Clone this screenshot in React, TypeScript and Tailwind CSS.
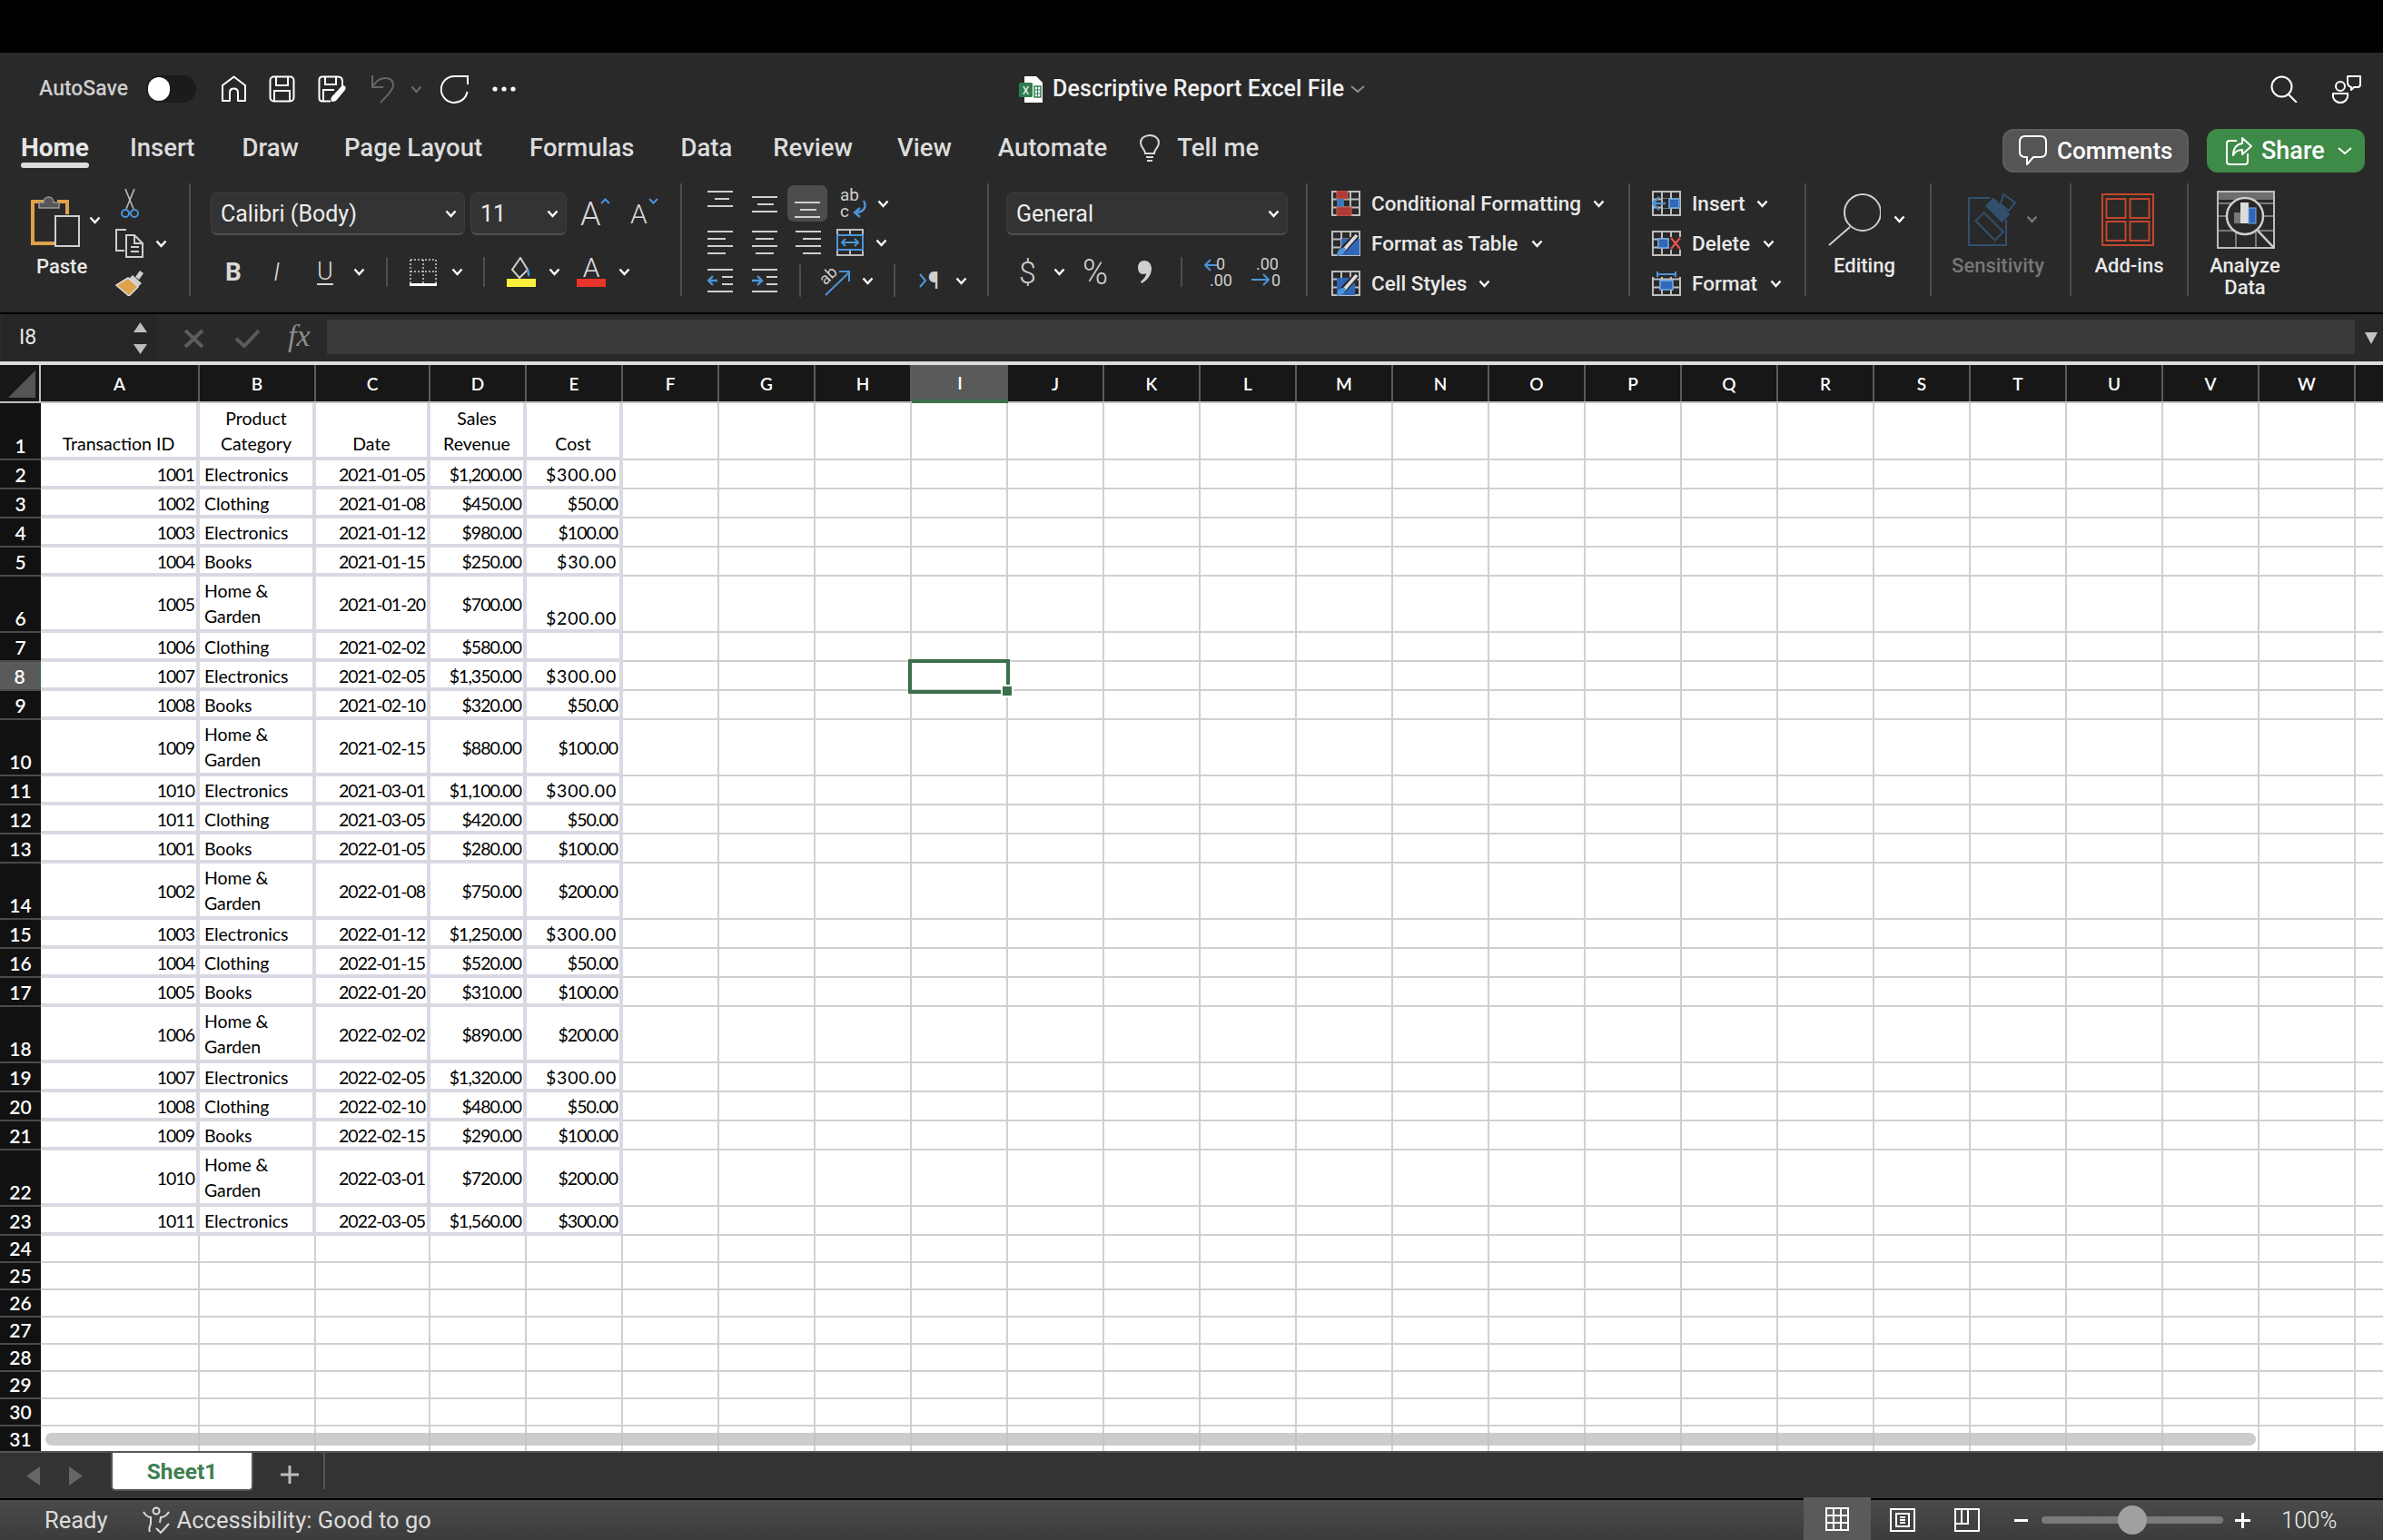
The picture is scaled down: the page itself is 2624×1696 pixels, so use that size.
import type { ReactNode } from 'react'

// ---------- sheet data ----------

type Row = {
  id: string
  cat: string
  date: string
  rev: string
  cost: string
  wideCost?: boolean
}

const DATA: Row[] = [
  { id: '1001', cat: 'Electronics', date: '2021-01-05', rev: '$1,200.00', cost: '$300.00', wideCost: true },
  { id: '1002', cat: 'Clothing', date: '2021-01-08', rev: '$450.00', cost: '$50.00' },
  { id: '1003', cat: 'Electronics', date: '2021-01-12', rev: '$980.00', cost: '$100.00' },
  { id: '1004', cat: 'Books', date: '2021-01-15', rev: '$250.00', cost: '$30.00', wideCost: true },
  { id: '1005', cat: 'Home &|Garden', date: '2021-01-20', rev: '$700.00', cost: '$200.00', wideCost: true },
  { id: '1006', cat: 'Clothing', date: '2021-02-02', rev: '$580.00', cost: '' },
  { id: '1007', cat: 'Electronics', date: '2021-02-05', rev: '$1,350.00', cost: '$300.00', wideCost: true },
  { id: '1008', cat: 'Books', date: '2021-02-10', rev: '$320.00', cost: '$50.00' },
  { id: '1009', cat: 'Home &|Garden', date: '2021-02-15', rev: '$880.00', cost: '$100.00' },
  { id: '1010', cat: 'Electronics', date: '2021-03-01', rev: '$1,100.00', cost: '$300.00', wideCost: true },
  { id: '1011', cat: 'Clothing', date: '2021-03-05', rev: '$420.00', cost: '$50.00' },
  { id: '1001', cat: 'Books', date: '2022-01-05', rev: '$280.00', cost: '$100.00' },
  { id: '1002', cat: 'Home &|Garden', date: '2022-01-08', rev: '$750.00', cost: '$200.00' },
  { id: '1003', cat: 'Electronics', date: '2022-01-12', rev: '$1,250.00', cost: '$300.00', wideCost: true },
  { id: '1004', cat: 'Clothing', date: '2022-01-15', rev: '$520.00', cost: '$50.00' },
  { id: '1005', cat: 'Books', date: '2022-01-20', rev: '$310.00', cost: '$100.00' },
  { id: '1006', cat: 'Home &|Garden', date: '2022-02-02', rev: '$890.00', cost: '$200.00' },
  { id: '1007', cat: 'Electronics', date: '2022-02-05', rev: '$1,320.00', cost: '$300.00', wideCost: true },
  { id: '1008', cat: 'Clothing', date: '2022-02-10', rev: '$480.00', cost: '$50.00' },
  { id: '1009', cat: 'Books', date: '2022-02-15', rev: '$290.00', cost: '$100.00' },
  { id: '1010', cat: 'Home &|Garden', date: '2022-03-01', rev: '$720.00', cost: '$200.00' },
  { id: '1011', cat: 'Electronics', date: '2022-03-05', rev: '$1,560.00', cost: '$300.00' },
]

const EMPTY_COLS = ['F', 'G', 'H', 'I', 'J', 'K', 'L', 'M', 'N', 'O', 'P', 'Q', 'R', 'S', 'T', 'U', 'V', 'W', '']

// ---------- small icon helpers ----------

function Chev({ className = '', color = '#fff' }: { className?: string; color?: string }) {
  return (
    <svg width="13" height="9" viewBox="0 0 13 9" className={`shrink-0 ${className}`}>
      <path d="M1.5 1.5 6.5 7l5-5.5" fill="none" stroke={color} strokeWidth="2.4" />
    </svg>
  )
}

function Sep({ className = '' }: { className?: string }) {
  return <div className={`w-[2px] bg-[#4d4d4d] shrink-0 ${className}`} />
}

function Lines({ kind, className = '' }: { kind: string; className?: string }) {
  const c = '#cfcfcf'
  const sets: Record<string, [number, number, number][]> = {
    top: [[0, 1, 28], [8, 9, 24], [0, 17, 28]],
    mid: [[0, 1, 28], [6, 9, 24], [0, 17, 28]],
    left: [[0, 1, 28], [0, 9, 20], [0, 17, 28], [0, 25, 20]],
    center: [[0, 1, 28], [4, 9, 24], [0, 17, 28], [4, 25, 24]],
    right: [[0, 1, 28], [8, 9, 28], [0, 17, 28], [8, 25, 28]],
  }
  const set = sets[kind]
  return (
    <svg width="28" height={set.length === 4 ? 26 : 18} className={`shrink-0 ${className}`}>
      {set.map(([a, y, b], i) => (
        <rect key={i} x={a} y={y - 1} width={b - a} height="2" fill={c} />
      ))}
    </svg>
  )
}

function Indent({ dir, className = '' }: { dir: 'in' | 'out'; className?: string }) {
  return (
    <svg width="28" height="26" className={`shrink-0 ${className}`}>
      <path d="M0 1h28M16 9h12M16 17h12M0 25h28" stroke="#cfcfcf" strokeWidth="2" />
      {dir === 'out' ? (
        <path d="M11 13H1M6 8l-5 5 5 5" fill="none" stroke="#4c94d8" strokeWidth="2.4" />
      ) : (
        <path d="M0 13h10M6 8l5 5-5 5" fill="none" stroke="#4c94d8" strokeWidth="2.4" />
      )}
    </svg>
  )
}

function GridIcon({ children, className = '' }: { children?: ReactNode; className?: string }) {
  return (
    <svg width="32" height="28" className={`shrink-0 ${className}`}>
      <path d="M1 1h30v26H1zM11 1v26M21 1v26M1 9.500h30M1 18.500h30" fill="none" stroke="#bdbdbd" strokeWidth="2" />
      {children}
    </svg>
  )
}

function Brush() {
  return (
    <>
      <path d="M12 22 28 5" stroke="#292929" strokeWidth="7" />
      <path d="M13 22 28 5" stroke="#dedede" strokeWidth="3.500" />
      <path d="M6 28c0-6 4-10 9-9 2 4-3 9-9 9Z" fill="#4c94d8" />
    </>
  )
}

function Home() {
  return (
    <svg width="29" height="30" fill="none" stroke="#fff" strokeWidth="2" className="ml-[27px] shrink-0">
      <path d="M2 28V11L14.500 1.500 27 11v17h-8V19c0-3-2-4.500-4.500-4.500S10 16 10 19v9Z" strokeLinejoin="round" />
    </svg>
  )
}

function Save({ className = '' }: { className?: string }) {
  return (
    <svg width="29" height="30" fill="none" stroke="#fff" strokeWidth="2" className={`shrink-0 ${className}`}>
      <rect x="1.500" y="1.500" width="26" height="27" rx="4" />
      <path d="M8 2v9h13V2M6 28V17h17v11" />
    </svg>
  )
}

function SaveAs({ className = '' }: { className?: string }) {
  return (
    <svg width="32" height="30" fill="none" stroke="#fff" strokeWidth="2" className={`shrink-0 ${className}`}>
      <path d="M14 28.500H5c-2 0-3.500-1.500-3.500-3.500V5c0-2 1.500-3.500 3.500-3.500h17c3 0 5 2 5 5v6" />
      <path d="M8 2v8h12V2M6 28V16h12" />
      <path d="M17 29c-3 0-3-2-2-5l11-12c3-2 6 1 4 4L20 28Z" fill="#fff" stroke="none" />
    </svg>
  )
}

function Undo({ className = '' }: { className?: string }) {
  return (
    <svg width="26" height="32" fill="none" stroke="#666" strokeWidth="2" className={`shrink-0 ${className}`}>
      <path d="M2 1v13h12M2 14C9 1 25 1 25 12c0 6-9 13-14 19" />
    </svg>
  )
}

function Redo({ className = '' }: { className?: string }) {
  return (
    <svg width="32" height="32" fill="none" stroke="#fff" strokeWidth="2" className={`shrink-0 ${className}`}>
      <path d="M15 2H30V11M29.500 19A14.500 14.500 0 1 1 15 2" />
    </svg>
  )
}

// ---------- title bar ----------

function TitleRow() {
  return (
    <div className="flex items-center h-[80px]">
      <span className="ml-[43px] text-[23px] font-medium text-[#cdcdcd]">AutoSave</span>
      <div className="ml-[20px] w-[55px] h-[30px] rounded-full bg-[#1b1b1b] flex items-center pl-[2px]">
        <div className="w-[24px] h-[26px] rounded-full bg-white" />
      </div>
      <Home />
      <Save className="ml-[24px]" />
      <SaveAs className="ml-[25px]" />
      <Undo className="ml-[26px]" />
      <Chev className="ml-[18px]" color="#666" />
      <Redo className="ml-[20px]" />
      <svg width="26" height="6" className="ml-[25px] shrink-0" fill="#fff">
        <circle cx="3" cy="3" r="2.600" />
        <circle cx="13" cy="3" r="2.600" />
        <circle cx="23" cy="3" r="2.600" />
      </svg>
      <svg width="26" height="29" className="ml-[554px] shrink-0">
        <path d="M6 0h13l7 7v22H6Z" fill="#fff" />
        <path d="M17 11h7v12h-7z" fill="none" stroke="#2f7d4f" strokeWidth="1.500" />
        <path d="M20.500 11v12M17 15h7M17 19h7" stroke="#2f7d4f" strokeWidth="1" />
        <rect x="0" y="7" width="15" height="16" rx="1.500" fill="#2f7d4f" />
        <text x="7.500" y="19.500" textAnchor="middle" fontSize="12" fill="#fff" fontFamily="Roboto, sans-serif">X</text>
      </svg>
      <span className="ml-[11px] text-[25px] font-medium text-[#f0f0f0] whitespace-nowrap tracking-[0.1px]">Descriptive Report Excel File</span>
      <svg width="16" height="9" className="ml-[7px] shrink-0">
        <path d="M1 1l7 6 7-6" fill="none" stroke="#8e8e8e" strokeWidth="2" />
      </svg>
      <svg width="30" height="30" fill="none" stroke="#fff" strokeWidth="2" className="ml-auto shrink-0">
        <circle cx="12.500" cy="12.500" r="11" />
        <path d="M20 21l9 9" />
      </svg>
      <svg width="34" height="32" fill="none" stroke="#fff" strokeWidth="2" className="ml-[37px] mr-[23px] shrink-0">
        <circle cx="10" cy="13" r="5" />
        <path d="M2 21h16c1 6-3 10-8 10s-9-4-8-10Z" />
        <path d="M18 2h14v9c0 2-1 3-3 3h-4l-3 3v-3c-3-1-4-3-4-5Z" strokeLinejoin="round" />
      </svg>
    </div>
  )
}

const TABS: [string, string][] = [
  ['Insert', 'ml-[45px]'],
  ['Draw', 'ml-[52px]'],
  ['Page Layout', 'ml-[50px]'],
  ['Formulas', 'ml-[52px]'],
  ['Data', 'ml-[51px]'],
  ['Review', 'ml-[45px]'],
  ['View', 'ml-[49px]'],
  ['Automate', 'ml-[51px]'],
]

function TabRow() {
  return (
    <div className="flex h-[64px] pl-[23px] items-start">
      <div className="flex items-center h-[50px] text-[27.5px] text-[#dcdcdc] font-medium">
        <span className="relative text-[28px] font-bold text-[#e6e6e6]">
          Home
          <span className="absolute left-0 right-0 top-[37px] h-[6px] rounded-full bg-[#dcdcdc]" />
        </span>
        {TABS.map(([t, ml]) => (
          <span key={t} className={ml}>{t}</span>
        ))}
        <svg width="24" height="30" fill="none" stroke="#d8d8d8" strokeWidth="2" className="ml-[35px] shrink-0">
          <path d="M7 21c0-5-5-6-5-12a10 8 0 0 1 20 0c0 6-5 7-5 12Z" />
          <path d="M8 25h8M9 29h6" />
        </svg>
        <span className="ml-[18px]">Tell me</span>
      </div>
      <button className="ml-auto mt-[4px] w-[205px] h-[48px] rounded-[12px] bg-[#555] border-2 border-[#5e5e5e] flex items-center pl-[15px] text-[26px] font-medium text-white">
        <svg width="33" height="36" fill="none" stroke="#fff" strokeWidth="2" className="shrink-0">
          <path d="M8 2h17c4 0 6 2 6 6v11c0 4-2 6-6 6H17l-7 8v-8H8c-4 0-6-2-6-6V8c0-4 2-6 6-6Z" strokeLinejoin="round" />
        </svg>
        <span className="ml-[10px]">Comments</span>
      </button>
      <button className="ml-[20px] mr-[20px] mt-[4px] w-[174px] h-[48px] rounded-[12px] bg-[#3e8a47] flex items-center pl-[20px] text-[27px] font-medium text-white">
        <svg width="30" height="32" fill="none" stroke="#fff" strokeWidth="2" className="shrink-0">
          <path d="M13 5H5C3 5 2 6 2 8v20c0 2 1 3 3 3h17c2 0 3-1 3-3v-9" />
          <path d="M19 2l10 9-10 9v-5c-5 0-8 2-10 6 0-8 4-12 10-13Z" strokeLinejoin="round" />
        </svg>
        <span className="ml-[10px]">Share</span>
        <svg width="16" height="9" className="ml-[14px] shrink-0">
          <path d="M1 1l7 6 7-6" fill="none" stroke="#fff" strokeWidth="2" />
        </svg>
      </button>
    </div>
  )
}

// ---------- ribbon groups ----------

function Clipboard() {
  return (
    <div className="w-[208px] shrink-0 flex">
      <div className="ml-[34px] mt-[10px] flex flex-col">
        <div className="flex items-center">
          <svg width="54" height="60" className="shrink-0">
            <path d="M29 10h11v14M27 56H2V10h12" fill="none" stroke="#dfa24b" strokeWidth="4" />
            <path d="M9 17v-6h5c0-8 11-8 11 0h6v6Z" fill="#555" stroke="#9a9a9a" strokeWidth="1.500" />
            <rect x="27" y="26" width="26" height="33" fill="#292929" stroke="#cfcfcf" strokeWidth="2" />
          </svg>
          <Chev className="ml-[10px]" />
        </div>
        <span className="mt-[5px] ml-[6px] text-[22px] font-medium text-[#e8e8e8]">Paste</span>
      </div>
      <div className="ml-[16px] flex flex-col">
        <div className="flex pl-[6px] mt-[6px] h-[36px]">
          <svg width="20" height="32" fill="none" className="shrink-0">
            <path d="M5 0l9 22M15 0 6 22" stroke="#bdbdbd" strokeWidth="1.600" />
            <circle cx="5" cy="27" r="4" stroke="#4c94d8" strokeWidth="2" />
            <circle cx="15" cy="27" r="4" stroke="#4c94d8" strokeWidth="2" />
          </svg>
        </div>
        <div className="flex items-center h-[32px] mt-[8px]">
          <svg width="32" height="32" fill="none" stroke="#cfcfcf" strokeWidth="2" className="shrink-0">
            <path d="M12 1H1v23h9M12 7h9l9 9v15H12ZM21 8v8h9" />
            <path d="M17 20h9M17 25h9" />
          </svg>
          <Chev className="ml-[12px]" />
        </div>
        <svg width="32" height="29" className="mt-[13px] shrink-0">
          <path d="M22 8l5-7 4 3-5 7Z" fill="#cfcfcf" />
          <path d="M19 6l10 9-4 4-10-9Z" fill="#cfcfcf" />
          <path d="M14 9 1 17l14 12 10-10Z" fill="#dfa24b" stroke="#dcdcdc" strokeWidth="1.500" />
        </svg>
      </div>
    </div>
  )
}

function SelectBox({ children, className = '' }: { children: ReactNode; className?: string }) {
  return (
    <div className={`h-[47px] rounded-[7px] bg-[#333] border border-[#3d3d3d] border-b-2 border-b-[#4f4f4f] flex items-center justify-between pt-[1px] pl-[10px] pr-[8px] text-[25px] text-[#ececec] ${className}`}>
      {children}
    </div>
  )
}

function FontGroup() {
  return (
    <div className="w-[539px] shrink-0 flex flex-col pl-[22px]">
      <div className="flex items-center mt-[10px]">
        <SelectBox className="w-[280px]">
          <span className="whitespace-nowrap">Calibri (Body)</span>
          <Chev />
        </SelectBox>
        <SelectBox className="w-[106px] ml-[6px]">
          <span>11</span>
          <Chev />
        </SelectBox>
        <div className="relative ml-[15px] w-[30px] text-[36px] font-light leading-none text-[#d8d8d8]">
          A
          <svg width="11" height="8" className="absolute left-[22px] top-[0px]">
            <path d="M1 6l4.500-4.500L10 6" fill="none" stroke="#4c94d8" strokeWidth="2" />
          </svg>
        </div>
        <div className="relative ml-[25px] w-[30px] text-[30px] font-light leading-none text-[#d8d8d8]">
          A
          <svg width="11" height="8" className="absolute left-[20px] top-[-4px]">
            <path d="M1 2l4.500 4.500L10 2" fill="none" stroke="#4c94d8" strokeWidth="2" />
          </svg>
        </div>
      </div>
      <div className="flex items-center mt-[24px] h-[33px]">
        <span className="ml-[16px] w-[16px] text-[28px] font-bold text-[#d8d8d8]">B</span>
        <span className="ml-[37px] w-[14px] text-[28px] italic font-light text-[#d8d8d8]">I</span>
        <span className="ml-[33px] w-[20px] text-[27px] font-light underline underline-offset-4 text-[#d8d8d8] text-center">U</span>
        <Chev className="ml-[21px]" />
        <Sep className="ml-[23px] h-[33px]" />
        <svg width="30" height="30" className="ml-[24px] shrink-0">
          <path d="M1 1h28M1 1v26M29 1v26M15 1v26M1 14h28" stroke="#cfcfcf" strokeWidth="1.500" strokeDasharray="2 2" fill="none" />
          <rect x="0" y="27" width="30" height="3" fill="#fff" />
        </svg>
        <Chev className="ml-[16px]" />
        <Sep className="ml-[22px] h-[33px]" />
        <svg width="32" height="33" className="ml-[24px] shrink-0">
          <path d="M15 1 6 14l8 9 9-9Z" fill="none" stroke="#cfcfcf" strokeWidth="2" />
          <path d="M23 12c3 4 3 8 1 10-2-3-2-6-1-10Z" fill="#4c94d8" />
          <rect x="0" y="24" width="32" height="9" fill="#fdf03c" />
        </svg>
        <Chev className="ml-[14px]" />
        <div className="ml-[18px] w-[32px] flex flex-col items-center shrink-0">
          <span className="text-[30px] font-light leading-[24px] text-[#e0e0e0]">A</span>
          <div className="w-[32px] h-[9px] bg-[#e8342a]" />
        </div>
        <Chev className="ml-[14px]" />
      </div>
    </div>
  )
}

function AlignGroup() {
  return (
    <div className="w-[336px] shrink-0 flex flex-col pl-[28px]">
      <div className="flex items-start h-[44px] mt-[2px]">
        <Lines kind="top" className="mt-[6px]" />
        <Lines kind="mid" className="mt-[12px] ml-[21px]" />
        <div className="ml-[11px] w-[44px] h-[40px] rounded-[7px] bg-[#4d4d4d] flex justify-center pt-[18px]">
          <Lines kind="mid" />
        </div>
        <svg width="32" height="42" className="ml-[14px] -mt-[1px] shrink-0">
          <text x="0" y="18" fontSize="19" fill="#cfcfcf" fontFamily="Roboto, sans-serif">ab</text>
          <text x="0" y="36" fontSize="19" fill="#cfcfcf" fontFamily="Roboto, sans-serif">c</text>
          <path d="M26 18c3 5 2 13-9 13M22 26l-6 5 6 5" fill="none" stroke="#4c94d8" strokeWidth="2.400" />
        </svg>
        <Chev className="ml-[9px] mt-[16px]" />
      </div>
      <div className="flex items-center h-[30px] mt-[4px]">
        <Lines kind="left" />
        <Lines kind="center" className="ml-[21px]" />
        <Lines kind="right" className="ml-[20px]" />
        <svg width="30" height="30" className="ml-[17px] shrink-0">
          <path d="M1 1h28v28H1zM15 1v6M15 23v6" fill="none" stroke="#bdbdbd" strokeWidth="2" />
          <rect x="1" y="7" width="28" height="16" fill="#292929" stroke="#4c94d8" strokeWidth="2" />
          <path d="M6 15h18M10 11l-4 4 4 4M20 11l4 4-4 4" fill="none" stroke="#4c94d8" strokeWidth="2" />
        </svg>
        <Chev className="ml-[13px]" />
      </div>
      <div className="flex items-center h-[36px] mt-[9px]">
        <Indent dir="out" />
        <Indent dir="in" className="ml-[21px]" />
        <Sep className="ml-[24px] h-[36px]" />
        <svg width="53" height="54" className="ml-[13px] shrink-0">
          <g transform="translate(10 10)">
            <text x="0" y="17" fontSize="18" fill="#cfcfcf" fontFamily="Roboto, sans-serif" transform="rotate(-45 9 15)">ab</text>
            <path d="M4 33 30 8M19 7h11v11" fill="none" stroke="#4c94d8" strokeWidth="2" />
          </g>
        </svg>
        <Chev className="ml-[1px]" />
        <Sep className="ml-[22px] h-[36px]" />
        <span className="ml-[26px] flex items-center shrink-0">
          <svg width="9" height="16" className="shrink-0">
            <path d="M1 1l6 7-6 7" fill="none" stroke="#4c94d8" strokeWidth="2.200" />
          </svg>
          <span className="ml-[1px] w-[16px] text-[25px] text-[#cfcfcf] leading-none">¶</span>
        </span>
        <Chev className="ml-[14px]" />
      </div>
    </div>
  )
}

function NumberGroup() {
  return (
    <div className="w-[349px] shrink-0 flex flex-col pl-[19px]">
      <SelectBox className="w-[310px] mt-[10px]">
        <span>General</span>
        <Chev />
      </SelectBox>
      <div className="flex items-center mt-[24px] h-[33px] text-[#cfcfcf]">
        <span className="ml-[14px] w-[17px] text-[34px] font-light leading-none">$</span>
        <Chev className="ml-[21px]" />
        <span className="ml-[19px] w-[31px] text-[38px] font-light leading-none">%</span>
        <svg width="15" height="25" className="ml-[30px] shrink-0" fill="#cfcfcf">
          <path d="M7 0c5 0 8 4 8 9 0 7-5 13-11 16l-1-2c3-2 6-6 6-9-1 .5-2 1-3 1-4 0-6-3-6-7.500S3 0 7 0Z" />
        </svg>
        <Sep className="ml-[32px] h-[33px]" />
        <svg width="31" height="41" className="ml-[24px] shrink-0">
          <text x="13" y="18" fontSize="18" fill="#cfcfcf" fontFamily="Roboto, sans-serif">0</text>
          <text x="6" y="36" fontSize="18" fill="#cfcfcf" fontFamily="Roboto, sans-serif">.00</text>
          <path d="M14 13H2M7 7 1 13l6 6" fill="none" stroke="#4c94d8" strokeWidth="2" />
        </svg>
        <svg width="32" height="41" className="ml-[21px] shrink-0">
          <text x="5" y="18" fontSize="18" fill="#cfcfcf" fontFamily="Roboto, sans-serif">.00</text>
          <text x="22" y="36" fontSize="18" fill="#cfcfcf" fontFamily="Roboto, sans-serif">0</text>
          <path d="M0 29h18M13 23l6 6-6 6" fill="none" stroke="#4c94d8" strokeWidth="2" />
        </svg>
      </div>
    </div>
  )
}

function MenuRow({ icon, label, className = '', gap = 'ml-[12px]' }: { icon: ReactNode; label: string; className?: string; gap?: string }) {
  return (
    <div className={`flex items-center h-[28px] ${className}`}>
      {icon}
      <span className="ml-[12px] pt-[2px] text-[22.5px] font-medium text-[#e8e8e8] whitespace-nowrap">{label}</span>
      <Chev className={gap} />
    </div>
  )
}

function StylesGroup() {
  return (
    <div className="w-[353px] shrink-0 flex flex-col pl-[26px] pt-[8px]">
      <MenuRow
        label="Conditional Formatting"
        gap="ml-[13px]"
        icon={
          <GridIcon>
            <rect x="6" y="0" width="12" height="9" fill="#b03a34" stroke="#c9605a" strokeWidth="1" />
            <rect x="6" y="9" width="8" height="9" fill="#3d79b8" />
            <rect x="6" y="18" width="16" height="10" fill="#b03a34" stroke="#c9605a" strokeWidth="1" />
          </GridIcon>
        }
      />
      <MenuRow
        label="Format as Table"
        gap="ml-[15px]"
        className="mt-[16px]"
        icon={
          <GridIcon>
            <rect x="11" y="9" width="20" height="18" fill="#2f68b8" />
            <Brush />
          </GridIcon>
        }
      />
      <MenuRow
        label="Cell Styles"
        gap="ml-[13px]"
        className="mt-[16px]"
        icon={
          <GridIcon>
            <rect x="6" y="8" width="20" height="19" fill="#2f68b8" />
            <Brush />
          </GridIcon>
        }
      />
    </div>
  )
}

function CellsGroup() {
  return (
    <div className="w-[192px] shrink-0 flex flex-col pl-[24px] pt-[8px]">
      <MenuRow
        label="Insert"
        icon={
          <GridIcon>
            <rect x="12" y="9" width="19" height="10" fill="#292929" />
            <rect x="19" y="9" width="11" height="10" fill="#2f68b8" stroke="#79aee6" strokeWidth="1.500" />
            <path d="M15 14H2M8 7 1 14l7 7" fill="none" stroke="#4c94d8" strokeWidth="2.400" />
          </GridIcon>
        }
      />
      <MenuRow
        label="Delete"
        gap="ml-[14px]"
        className="mt-[16px]"
        icon={
          <GridIcon>
            <rect x="19" y="7" width="13" height="14" fill="#292929" />
            <rect x="7" y="9" width="11" height="10" fill="#2f68b8" stroke="#79aee6" strokeWidth="1.500" />
            <path d="M21 8l10 12M31 8 21 20" stroke="#e4544d" strokeWidth="2.200" />
          </GridIcon>
        }
      />
      <MenuRow
        label="Format"
        gap="ml-[14px]"
        className="mt-[16px]"
        icon={
          <GridIcon>
            <rect x="0" y="0" width="32" height="7" fill="#292929" />
            <path d="M6 1v6M26 1v6M6 4h20" stroke="#4c94d8" strokeWidth="2" />
            <rect x="9" y="11" width="14" height="10" fill="#2f68b8" stroke="#79aee6" strokeWidth="1.500" />
          </GridIcon>
        }
      />
    </div>
  )
}

function LargeGroup({ width, icon, label, className = '', pl }: { width: string; icon: ReactNode; label: ReactNode; className?: string; pl: string }) {
  return (
    <div className={`${width} shrink-0 flex flex-col items-center ${className}`}>
      <div className={`h-[79px] flex items-center self-start ${pl}`}>{icon}</div>
      <span className="text-[22px] font-medium leading-[24px] text-center">{label}</span>
    </div>
  )
}

function Ribbon() {
  return (
    <div className="flex h-[124px] items-start">
      <Clipboard />
      <Sep className="h-[124px]" />
      <FontGroup />
      <Sep className="h-[124px]" />
      <AlignGroup />
      <Sep className="h-[124px]" />
      <NumberGroup />
      <Sep className="h-[124px]" />
      <StylesGroup />
      <Sep className="h-[124px]" />
      <CellsGroup />
      <Sep className="h-[124px]" />
      <LargeGroup
        width="w-[136px]"
        pl="pl-[24px]"
        className="text-[#e8e8e8] pr-[8px]"
        label="Editing"
        icon={
          <>
            <svg width="58" height="58" fill="none" stroke="#cfcfcf" strokeWidth="2" className="shrink-0">
              <ellipse cx="38" cy="21" rx="20" ry="20" />
              <path d="M24 37 1 57" />
            </svg>
            <Chev className="ml-[14px]" />
          </>
        }
      />
      <Sep className="h-[124px]" />
      <LargeGroup
        width="w-[152px]"
        pl="pl-[40px]"
        className="text-[#777] pr-[6px]"
        label="Sensitivity"
        icon={
          <>
            <svg width="54" height="60" fill="none" stroke="#32506e" strokeWidth="2" className="shrink-0">
              <path d="M24 6H1v52h41V30" />
              <rect x="9" y="31" width="30" height="13" transform="rotate(45 24 37)" />
              <rect x="21" y="14" width="24" height="11" fill="#32506e" transform="rotate(45 33 19)" />
              <path d="M39 2l13 9-7 9-9-7Z" />
            </svg>
            <Chev className="ml-[10px]" color="#777" />
          </>
        }
      />
      <Sep className="h-[124px]" />
      <LargeGroup
        width="w-[127px]"
        pl="pl-[33px]"
        className="text-[#e8e8e8]"
        label="Add-ins"
        icon={
          <svg width="58" height="58" fill="none" stroke="#c5472a" strokeWidth="2" className="shrink-0">
            <rect x="1" y="1" width="56" height="56" />
            <rect x="5.500" y="6" width="21" height="21" />
            <rect x="31.500" y="6" width="21" height="21" />
            <rect x="5.500" y="31" width="21" height="21" />
            <rect x="31.500" y="31" width="21" height="21" />
          </svg>
        }
      />
      <Sep className="h-[124px]" />
      <LargeGroup
        width="w-[138px]"
        pl="pl-[31px]"
        className="text-[#e8e8e8] pr-[14px]"
        label={
          <>
            Analyze
            <br />
            Data
          </>
        }
        icon={
          <svg width="64" height="64" className="shrink-0">
            <rect x="1" y="1" width="62" height="62" fill="none" stroke="#bdbdbd" strokeWidth="2" />
            <rect x="2" y="2" width="60" height="8" fill="#6d6d6d" />
            <path d="M2 14h60M2 28h60M2 44h60M21 46v16M43 46v16" stroke="#7a7a7a" strokeWidth="2" />
            <circle cx="31" cy="28" r="20" fill="#292929" stroke="#cfcfcf" strokeWidth="2.500" />
            <rect x="19" y="24" width="8" height="12" fill="#777" />
            <rect x="26" y="13" width="9" height="23" fill="#dcdcdc" />
            <rect x="35" y="19" width="8" height="17" fill="#2f68b8" stroke="#79aee6" />
            <path d="M45 44l18 19" stroke="#cfcfcf" strokeWidth="2.500" />
          </svg>
        }
      />
    </div>
  )
}

// ---------- formula bar ----------

function FormulaBar() {
  return (
    <div className="flex h-[58px] border-t-2 border-t-black border-b-4 border-b-[#dcdcdc] bg-[#292929]">
      <div className="w-[170px] ml-[2px] shrink-0 bg-[#262626] flex items-center justify-between pl-[19px] pr-[10px] text-[23px] text-[#e8e8e8]">
        <span>I8</span>
        <svg width="15" height="37" className="shrink-0" fill="#bdbdbd">
          <path d="M7.500 1 15 12H0ZM0 25h15L7.500 36Z" />
        </svg>
      </div>
      <svg width="23" height="22" className="ml-[30px] mt-[16px] shrink-0">
        <path d="M2 2l19 18M21 2 2 20" stroke="#5c5c5c" strokeWidth="4" />
      </svg>
      <svg width="29" height="22" className="ml-[33px] mt-[16px] shrink-0">
        <path d="M2 11l9 8L27 2" fill="none" stroke="#5c5c5c" strokeWidth="4" />
      </svg>
      <span className="ml-[30px] mt-[2px] w-[28px] shrink-0 text-[34px] italic leading-[44px] text-[#8c8c8c] font-[Liberation_Serif,serif]">fx</span>
      <div className="ml-[15px] mt-[6px] w-[2233px] h-[38px] bg-[#393939] shrink-0" />
      <svg width="14" height="13" className="ml-[11px] mt-[20px] shrink-0" fill="#c4c4c4">
        <path d="M0 0h14L7 13Z" />
      </svg>
    </div>
  )
}

// ---------- sheet ----------

function ColHeaders() {
  return (
    <div className="flex h-[42px] border-b-2 border-b-[#bdbdbd] bg-[#171717] text-[19px] font-semibold text-white">
      <div className="w-[45px] shrink-0 border-r-2 border-r-[#bdbdbd] flex items-end justify-end pr-[4px] pb-[4px]">
        <svg width="30" height="30" className="shrink-0">
          <path d="M30 0v30H0Z" fill="#555" />
        </svg>
      </div>
      <div className="w-[175px] shrink-0 border-r-2 border-r-[#5a5a5a] pt-[2px] flex items-center justify-center">A</div>
      <div className="w-[128px] shrink-0 border-r-2 border-r-[#5a5a5a] pt-[2px] flex items-center justify-center">B</div>
      <div className="w-[126px] shrink-0 border-r-2 border-r-[#5a5a5a] pt-[2px] flex items-center justify-center">C</div>
      <div className="w-[106px] shrink-0 border-r-2 border-r-[#5a5a5a] pt-[2px] flex items-center justify-center">D</div>
      <div className="w-[106px] shrink-0 border-r-2 border-r-[#5a5a5a] pt-[2px] flex items-center justify-center">E</div>
      {EMPTY_COLS.map((c) =>
        c === 'I' ? (
          <div key={c} className="w-[106px] shrink-0 bg-[#5a5a5a] border-b-4 border-b-[#3c6f4c] pt-[2px] flex items-center justify-center h-[42px]">I</div>
        ) : (
          <div key={c} className="w-[106px] shrink-0 border-r-2 border-r-[#5a5a5a] pt-[2px] flex items-center justify-center">{c}</div>
        )
      )}
    </div>
  )
}

const THICK = 'border-r-4 border-b-4 border-[#d9d9e3] flex shrink-0 overflow-hidden'
const THIN = 'w-[106px] shrink-0 border-r-2 border-b-2 border-[#d0d0d0]'

function RowHead({ n, height, active }: { n: number; height: string; active?: boolean }) {
  return (
    <div className={`w-[45px] shrink-0 ${height} ${active ? 'bg-[#5a5a5a] border-r-2 border-r-[#3c6f4c]' : 'bg-[#111]'} border-b-2 border-b-[#4a4a4a] flex items-end justify-center text-[21px] font-semibold leading-[28px] text-white`}>
      {n}
    </div>
  )
}

function EmptyCells({ height }: { height: string }) {
  return (
    <>
      {EMPTY_COLS.map((c) => (
        <div key={c} className={`${THIN} ${height}`} />
      ))}
    </>
  )
}

function HeaderRow() {
  const h = 'h-[63px]'
  const text = 'text-center leading-[28px] w-full'
  return (
    <div className="flex">
      <RowHead n={1} height={h} />
      <div className={`${THICK} w-[175px] ${h} items-end`}><span className={`${text} whitespace-nowrap`}>Transaction ID</span></div>
      <div className={`${THICK} w-[128px] ${h} items-end`}><span className={text}>Product<br />Category</span></div>
      <div className={`${THICK} w-[126px] ${h} items-end`}><span className={text}>Date</span></div>
      <div className={`${THICK} w-[106px] ${h} items-end`}><span className={text}>Sales<br />Revenue</span></div>
      <div className={`${THICK} w-[106px] ${h} items-end`}><span className={text}>Cost</span></div>
      <EmptyCells height={h} />
    </div>
  )
}

function DataRow({ row, n }: { row: Row; n: number }) {
  const tall = row.cat.includes('|')
  const h = tall ? 'h-[62px]' : 'h-[32px]'
  const bottomCost = n === 6
  const num = 'w-full text-right pr-[2px] leading-[28px] tracking-[-1px]'
  return (
    <div className="flex">
      <RowHead n={n} height={h} active={n === 8} />
      <div className={`${THICK} w-[175px] ${h} items-center pt-[3px]`}><span className={num}>{row.id}</span></div>
      <div className={`${THICK} w-[128px] ${h} items-center ${tall ? 'pt-[1px]' : 'pt-[3px]'}`}>
        <span className="pl-[5px] leading-[28px] tracking-[-0.1px] whitespace-nowrap">
          {row.cat.split('|').map((part, i) => (
            <span key={i} className="block">{part}</span>
          ))}
        </span>
      </div>
      <div className={`${THICK} w-[126px] ${h} items-center pt-[3px]`}><span className={`${num} pr-[2px] tracking-[-0.7px]`}>{row.date}</span></div>
      <div className={`${THICK} w-[106px] ${h} items-center pt-[3px]`}><span className={num}>{row.rev}</span></div>
      <div className={`${THICK} w-[106px] ${h} ${bottomCost ? 'items-end' : 'items-center pt-[3px]'}`}>
        <span className={row.wideCost ? `w-full text-right pr-[3px] leading-[28px] tracking-[0.8px] ${bottomCost ? '-mb-[2px]' : ''}` : num}>{row.cost}</span>
      </div>
      <EmptyCells height={h} />
    </div>
  )
}

function BlankRow({ n, height }: { n: number; height: string }) {
  return (
    <div className="flex">
      <RowHead n={n} height={height} />
      <div className={`${THIN} w-[175px] ${height}`} />
      <div className={`${THIN} w-[128px] ${height}`} />
      <div className={`${THIN} w-[126px] ${height}`} />
      <div className={`${THIN} w-[106px] ${height}`} />
      <div className={`${THIN} w-[106px] ${height}`} />
      <EmptyCells height={height} />
    </div>
  )
}

function Sheet() {
  return (
    <div className="relative h-[1196px] overflow-hidden bg-white font-[Lato,sans-serif] text-[19.5px] text-black">
      <ColHeaders />
      <HeaderRow />
      {DATA.map((row, i) => (
        <DataRow key={i} row={row} n={i + 2} />
      ))}
      {[24, 25, 26, 27, 28, 29, 30, 31].map((n) => (
        <BlankRow key={n} n={n} height="h-[30px]" />
      ))}
      {/* selected cell */}
      <div className="absolute left-[1000px] top-[324px] w-[112px] h-[38px] border-4 border-[#3c6f4c]" />
      <div className="absolute left-[1104px] top-[354px] w-[10px] h-[10px] bg-[#3c6f4c] outline-2 outline-white" />
      {/* horizontal scrollbar */}
      <div className="absolute left-[50px] top-[1176px] w-[2434px] h-[14px] rounded-full bg-[#bfbfbf]/80" />
    </div>
  )
}

// ---------- footer ----------

function SheetTabs() {
  return (
    <div className="flex h-[52px] bg-[#333] border-t-2 border-t-[#555] items-start">
      <svg width="16" height="21" className="ml-[29px] mt-[15px] shrink-0" fill="#666">
        <path d="M15 0v21L0 10.500Z" />
      </svg>
      <svg width="15" height="21" className="ml-[31px] mt-[15px] shrink-0" fill="#666">
        <path d="M0 0v21l15-10.500Z" />
      </svg>
      <div className="ml-[31px] w-[157px] h-[42px] pt-[3px] rounded-b-[5px] bg-white border-b-2 border-x-2 border-[#555] flex items-center justify-center text-[24.5px] font-bold text-[#3e7f4f]">
        Sheet1
      </div>
      <svg width="20" height="20" className="ml-[30px] mt-[14px] shrink-0" fill="#bdbdbd">
        <path d="M8.500 0h3v8.500H20v3h-8.500V20h-3v-8.500H0v-3h8.500Z" />
      </svg>
      <Sep className="ml-[27px] h-[40px] bg-[#555]" />
    </div>
  )
}

function StatusBar() {
  return (
    <div className="flex h-[46px] items-center border-t-2 border-t-black bg-gradient-to-b from-[#4a4a4a] to-[#3c3c3c] text-[25.5px] text-[#dcdcdc]">
      <span className="ml-[49px]">Ready</span>
      <svg width="32" height="30" fill="none" stroke="#dcdcdc" strokeWidth="2" className="ml-[38px] shrink-0">
        <circle cx="15" cy="5" r="3.500" />
        <path d="M1 6c3 5 6 6 8 6v6c0 4-3 5-1 10M29 6c-3 5-6 6-9 6l-1 6M15 24l5 5 9-10" />
      </svg>
      <span className="ml-[6px]">Accessibility: Good to go</span>
      <div className="ml-auto w-[74px] h-[48px] -mt-[2px] bg-[#5a5a5a] flex items-center justify-center shrink-0">
        <svg width="26" height="26" fill="none" stroke="#fff" strokeWidth="2">
          <path d="M1 1h24v24H1zM9 1v24M17 1v24M1 9h24M1 17h24" />
        </svg>
      </div>
      <svg width="28" height="26" fill="none" stroke="#fff" strokeWidth="2" className="ml-[21px] shrink-0">
        <path d="M1 1h26v24H1zM7 6h14v14H7zM11 10h6M11 13h6M11 16h6" />
      </svg>
      <svg width="28" height="26" fill="none" stroke="#fff" strokeWidth="2" className="ml-[43px] shrink-0">
        <path d="M1 1h26v24H1zM1 17h14V1M8 1v16" />
      </svg>
      <div className="ml-[38px] w-[15px] h-[3px] bg-white shrink-0" />
      <div className="ml-[15px] w-[200px] h-[8px] rounded-full bg-[#7a7a7a] flex items-center shrink-0">
        <div className="ml-[84px] w-[32px] h-[32px] rounded-full bg-[#a0a0a0]" />
      </div>
      <svg width="17" height="17" className="ml-[13px] shrink-0" fill="#fff">
        <path d="M7 0h3v7h7v3h-7v7H7v-7H0V7h7Z" />
      </svg>
      <span className="ml-[34px] w-[63px] mr-[49px] whitespace-nowrap font-light text-[#f0f0f0]">100%</span>
    </div>
  )
}

export default function App() {
  return (
    <div className="w-[2624px] h-[1696px] overflow-hidden bg-black font-[Roboto,sans-serif] flex flex-col">
      <div className="h-[58px] bg-black shrink-0" />
      <div className="bg-[#292929] h-[286px] shrink-0 text-[#dcdcdc]">
        <TitleRow />
        <TabRow />
        <Ribbon />
      </div>
      <FormulaBar />
      <Sheet />
      <SheetTabs />
      <StatusBar />
    </div>
  )
}
